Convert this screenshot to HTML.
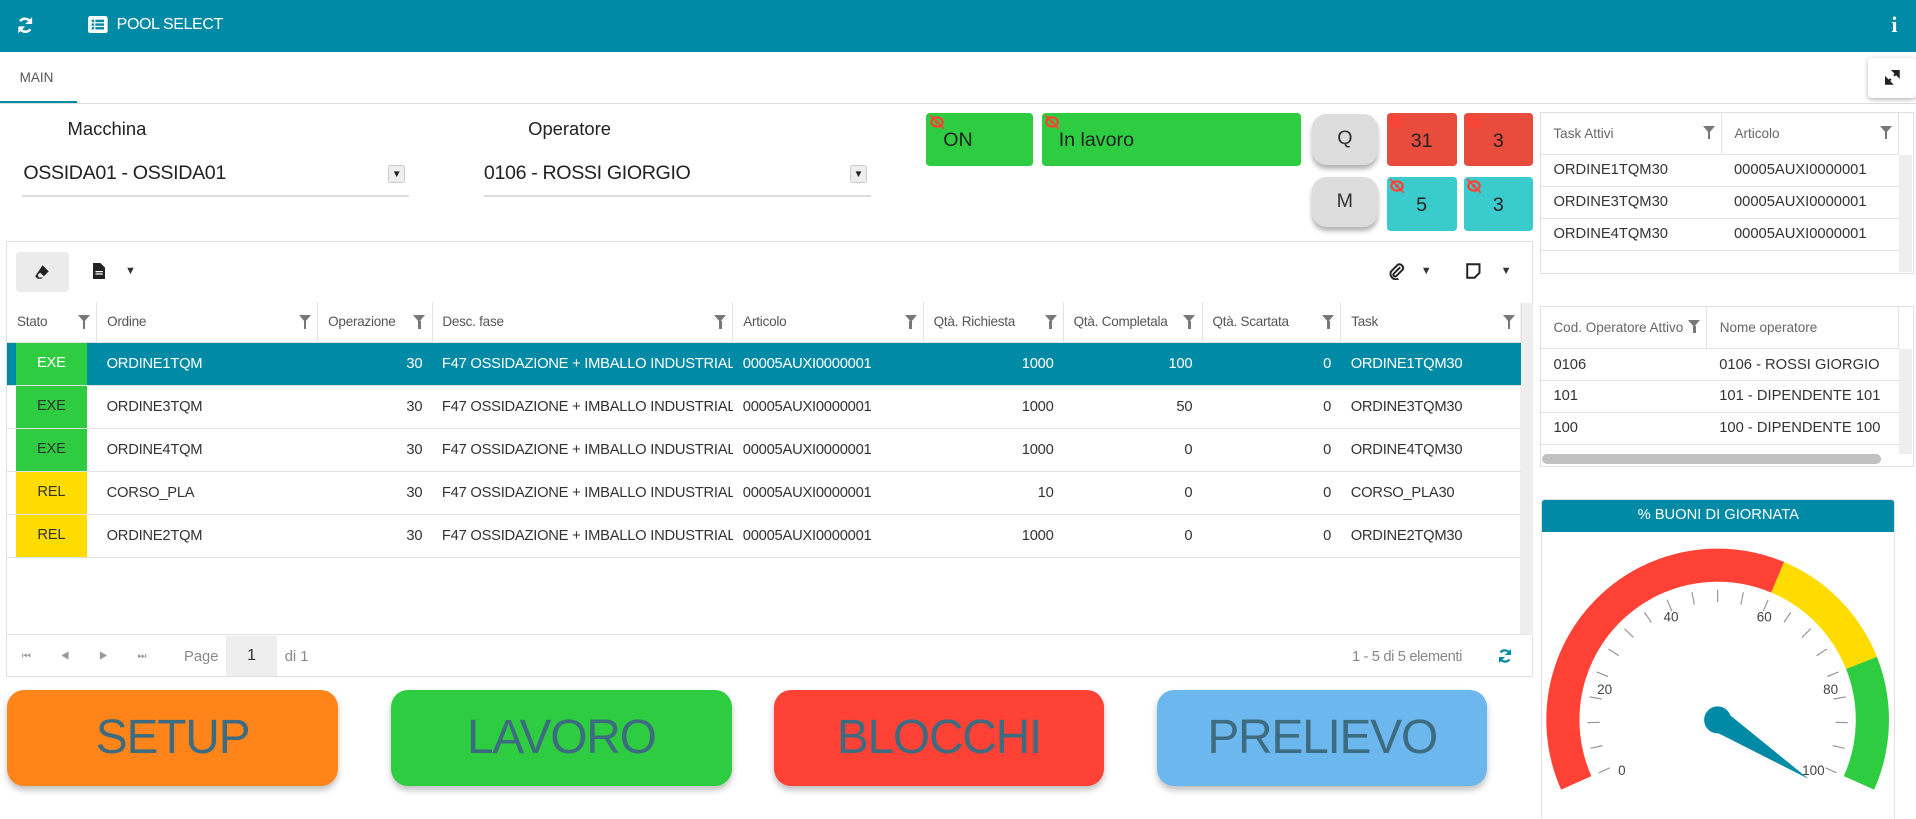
<!DOCTYPE html>
<html><head><meta charset="utf-8"><style>
*{box-sizing:border-box;margin:0;padding:0}
html,body{width:1916px;height:819px;overflow:hidden;background:#fff}
#r{zoom:1.2282;width:1560px;height:666px;position:relative;overflow:hidden;font-family:"Liberation Sans Narrow","Liberation Sans",sans-serif;color:#333}
.a{position:absolute}
.top{left:0;top:0;width:1560px;height:42px;background:#008aa6;color:#fff}
.ttl{left:95px;top:13px;font-size:13px;letter-spacing:-.3px}
.lbl{font-size:15px;color:#222}
.val{font-size:16px;color:#222;letter-spacing:-.3px}
.dd{width:14px;height:15px;background:#eee;border:1px solid #ccc;border-radius:2px;font-size:8px;text-align:center;line-height:14px;color:#222}
.ul{height:1px;background:#ddd}
.st{font-size:16px;color:#222;border-radius:3px;padding:13px 0 0 14px}
.gb{background:#ddd;border-radius:12px;box-shadow:0 3px 4px rgba(0,0,0,.3);font-size:16px;text-align:center;line-height:40px;color:#333}
.ns{font-size:16px;color:#222;border-radius:3px;text-align:center;padding-top:14px}
.eye{position:absolute;left:2px;top:1px;width:13px;height:13px}
.panel{border:1px solid #e0e0e0}
table{border-collapse:collapse;font-size:12px}
.g td,.g th{height:35px;border-bottom:1px solid #e3e3e3;padding:0 8px;white-space:nowrap;overflow:hidden;letter-spacing:-.2px}
.g th{font-weight:normal;font-size:11px;color:#555;text-align:left;border-right:1px solid #e3e3e3;height:33px;position:relative}
.f{position:absolute;right:5px;top:11px;width:0;height:0;border-left:5px solid transparent;border-right:5px solid transparent;border-top:6px solid #777}
.f:after{content:"";position:absolute;left:-1px;top:-1px;width:2px;height:6px;background:#777}
.g td{color:#333}
.rt{text-align:right}
.sel td{background:#008aa6;color:#fff}
.badge{display:block;width:58px;height:34px;line-height:34px;text-align:center;margin-left:-1px}
.big{height:78px;border-radius:14px;box-shadow:0 3px 5px rgba(0,0,0,.25);font-size:39px;color:#3d6c80;text-align:center;line-height:78px;letter-spacing:-1px}
.s td,.s th{height:26px;border-bottom:1px solid #e3e3e3;padding:0 10px;font-size:12px;white-space:nowrap;overflow:hidden}
.s th{height:34px;font-weight:normal;font-size:11px;color:#666;text-align:left;border-right:1px solid #e3e3e3;position:relative}
</style></head><body><div id="r">
<div class="a top">
 <svg class="a" style="left:13px;top:13px" width="15" height="15" viewBox="0 0 16 16"><path d="M13 6A5.5 5.5 0 0 0 3.5 4.5M3 10a5.5 5.5 0 0 0 9.5 1.5" stroke="#fff" stroke-width="2.2" fill="none"/><path d="M14 1v6h-6z M2 15v-6h6z" fill="#fff"/></svg>
 <svg class="a" style="left:72px;top:13px" width="16" height="14" viewBox="0 0 16 14"><rect width="16" height="14" rx="2" fill="#fff"/><g fill="#008aa6"><rect x="3" y="3" width="2" height="2"/><rect x="3" y="6" width="2" height="2"/><rect x="3" y="9" width="2" height="2"/><rect x="6" y="3" width="7" height="2"/><rect x="6" y="6" width="7" height="2"/><rect x="6" y="9" width="7" height="2"/></g></svg>
 <div class="a ttl">POOL SELECT</div>
 <div class="a" style="left:1540px;top:10px;font-size:18px;font-weight:bold;font-family:'Liberation Serif',serif">i</div>
</div>
<div class="a" style="left:16px;top:57px;font-size:11px;color:#555">MAIN</div>
<div class="a" style="left:0;top:82px;width:63px;height:2px;background:#008aa6"></div>
<div class="a" style="left:0;top:84px;width:1560px;height:1px;background:#ddd"></div>
<div class="a" style="left:1521px;top:47px;width:39px;height:33px;background:#fff;box-shadow:0 1px 4px rgba(0,0,0,.3);border-radius:3px"><svg class="a" style="left:14px;top:10px" width="12" height="12" viewBox="0 0 14 14"><path d="M8 1h5v5zM6 13H1V8zM12 2L8.5 5.5M2 12l3.5-3.5" stroke="#222" stroke-width="2" fill="#222"/></svg></div>

<div class="a lbl" style="left:55px;top:96px">Macchina</div>
<div class="a val" style="left:19px;top:132px">OSSIDA01 - OSSIDA01</div>
<div class="a dd" style="left:316px;top:134px">▼</div>
<div class="a ul" style="left:18px;top:159px;width:315px"></div>
<div class="a lbl" style="left:430px;top:96px">Operatore</div>
<div class="a val" style="left:394px;top:132px">0106 - ROSSI GIORGIO</div>
<div class="a dd" style="left:692px;top:134px">▼</div>
<div class="a ul" style="left:394px;top:159px;width:315px"></div>

<svg width="0" height="0" style="position:absolute"><defs><symbol id="eye" viewBox="0 0 14 14"><ellipse cx="7" cy="7" rx="5" ry="4" fill="none" stroke="#ff4136" stroke-width="2"/><circle cx="7" cy="7" r="1.5" fill="#ff4136"/><path d="M1 1l12 12" stroke="#ff4136" stroke-width="1.5"/></symbol></defs></svg>
<div class="a st" style="left:754px;top:92px;width:87px;height:43px;background:#2ecc40"><svg class="eye"><use href="#eye"/></svg>ON</div>
<div class="a st" style="left:848px;top:92px;width:211px;height:43px;background:#2ecc40"><svg class="eye"><use href="#eye"/></svg>In lavoro</div>
<div class="a gb" style="left:1068px;top:93px;width:54px;height:41px">Q</div>
<div class="a gb" style="left:1068px;top:144px;width:54px;height:41px">M</div>
<div class="a ns" style="left:1129px;top:92px;width:57px;height:43px;background:#e74c3c"><svg class="eye"><use href="#eye"/></svg>31</div>
<div class="a ns" style="left:1192px;top:92px;width:56px;height:43px;background:#e74c3c"><svg class="eye"><use href="#eye"/></svg>3</div>
<div class="a ns" style="left:1129px;top:144px;width:57px;height:44px;background:#3acccc"><svg class="eye"><use href="#eye"/></svg>5</div>
<div class="a ns" style="left:1192px;top:144px;width:56px;height:44px;background:#3acccc"><svg class="eye"><use href="#eye"/></svg>3</div>

<div class="a panel" style="left:5px;top:196px;width:1243px;height:355px">
 <div class="a" style="left:7px;top:8px;width:43px;height:33px;background:#ebebeb;border-radius:3px"><svg class="a" style="left:15px;top:10px" width="13" height="13" viewBox="0 0 13 13"><path d="M7 1l5 5-6 6H3L1 10z" fill="#222"/><path d="M3 9l2-2 3 3-1 1H4z" fill="#ebebeb"/></svg></div>
 <svg class="a" style="left:70px;top:17px" width="10" height="13" viewBox="0 0 10 13"><path d="M0 0h6l4 4v9H0z" fill="#222"/><path d="M2 7h6M2 9h6" stroke="#fff"/></svg>
 <div class="a" style="left:96px;top:19px;font-size:9px">▼</div>
 <svg class="a" style="left:1124px;top:16px" width="14" height="15" viewBox="0 0 14 15"><path d="M10 5L4.5 10.5a1.5 1.5 0 0 0 2 2L12 7a3 3 0 0 0-4-4L2.5 8.5a4.5 4.5 0 0 0 6 6" stroke="#222" stroke-width="1.6" fill="none"/></svg>
 <div class="a" style="left:1151px;top:19px;font-size:9px">▼</div>
 <svg class="a" style="left:1188px;top:17px" width="12" height="13" viewBox="0 0 12 13"><path d="M1 1h10v7l-4 4H1z" fill="none" stroke="#222" stroke-width="1.6"/></svg>
 <div class="a" style="left:1216px;top:19px;font-size:9px">▼</div>
 <div class="a" style="left:1232px;top:50px;width:10px;height:270px;background:#eee"></div>
 <table class="g a" style="left:0;top:49px;width:1233px;table-layout:fixed">
  <colgroup><col style="width:73px"><col style="width:180px"><col style="width:93px"><col style="width:245px"><col style="width:155px"><col style="width:114px"><col style="width:113px"><col style="width:113px"><col style="width:147px"></colgroup>
  <tr><th>Stato<i class="f"></i></th><th>Ordine<i class="f"></i></th><th>Operazione<i class="f"></i></th><th>Desc. fase<i class="f"></i></th><th>Articolo<i class="f"></i></th><th>Qtà. Richiesta<i class="f"></i></th><th>Qtà. Completala<i class="f"></i></th><th>Qtà. Scartata<i class="f"></i></th><th>Task<i class="f"></i></th></tr>
  <tr class="sel"><td><span class="badge" style="background:#2ecc40">EXE</span></td><td>ORDINE1TQM</td><td class="rt">30</td><td>F47 OSSIDAZIONE + IMBALLO INDUSTRIALE</td><td>00005AUXI0000001</td><td class="rt">1000</td><td class="rt">100</td><td class="rt">0</td><td>ORDINE1TQM30</td></tr>
  <tr><td><span class="badge" style="background:#2ecc40">EXE</span></td><td>ORDINE3TQM</td><td class="rt">30</td><td>F47 OSSIDAZIONE + IMBALLO INDUSTRIALE</td><td>00005AUXI0000001</td><td class="rt">1000</td><td class="rt">50</td><td class="rt">0</td><td>ORDINE3TQM30</td></tr>
  <tr><td><span class="badge" style="background:#2ecc40">EXE</span></td><td>ORDINE4TQM</td><td class="rt">30</td><td>F47 OSSIDAZIONE + IMBALLO INDUSTRIALE</td><td>00005AUXI0000001</td><td class="rt">1000</td><td class="rt">0</td><td class="rt">0</td><td>ORDINE4TQM30</td></tr>
  <tr><td><span class="badge" style="background:#ffdc00">REL</span></td><td>CORSO_PLA</td><td class="rt">30</td><td>F47 OSSIDAZIONE + IMBALLO INDUSTRIALE</td><td>00005AUXI0000001</td><td class="rt">10</td><td class="rt">0</td><td class="rt">0</td><td>CORSO_PLA30</td></tr>
  <tr><td><span class="badge" style="background:#ffdc00">REL</span></td><td>ORDINE2TQM</td><td class="rt">30</td><td>F47 OSSIDAZIONE + IMBALLO INDUSTRIALE</td><td>00005AUXI0000001</td><td class="rt">1000</td><td class="rt">0</td><td class="rt">0</td><td>ORDINE2TQM30</td></tr>
 </table>
 <div class="a" style="left:0;top:319px;width:1241px;height:1px;background:#e3e3e3"></div>
 <div class="a" style="left:12px;top:333px;font-size:8px;color:#999;word-spacing:22px">⏮ ◀ ▶ ⏭</div>
 <div class="a" style="left:144px;top:332px;font-size:12px;color:#888">Page</div>
 <div class="a" style="left:178px;top:321px;width:42px;height:33px;background:#eee;text-align:center;line-height:33px;font-size:13px">1</div>
 <div class="a" style="left:226px;top:332px;font-size:12px;color:#888">di 1</div>
 <div class="a" style="left:1095px;top:332px;font-size:12px;color:#888;letter-spacing:-.3px">1 - 5 di 5 elementi</div>
 <svg class="a" style="left:1213px;top:331px" width="13" height="13" viewBox="0 0 16 16"><path d="M13 6A5.5 5.5 0 0 0 3.5 4.5M3 10a5.5 5.5 0 0 0 9.5 1.5" stroke="#008aa6" stroke-width="2.2" fill="none"/><path d="M14 1v6h-6z M2 15v-6h6z" fill="#008aa6"/></svg>
</div>

<div class="a big" style="left:6px;top:562px;width:269px;background:#ff851b">SETUP</div>
<div class="a big" style="left:318px;top:562px;width:278px;background:#2ecc40">LAVORO</div>
<div class="a big" style="left:630px;top:562px;width:269px;background:#ff4136">BLOCCHI</div>
<div class="a big" style="left:942px;top:562px;width:269px;background:#6cb8ee">PRELIEVO</div>

<div class="a panel" style="left:1254px;top:91px;width:304px;height:132px">
 <div class="a" style="left:291px;top:34px;width:11px;height:96px;background:#eee"></div>
 <table class="s a" style="left:0;top:0;width:291px;table-layout:fixed"><colgroup><col style="width:147px"><col style="width:144px"></colgroup>
 <tr><th>Task Attivi<i class="f"></i></th><th>Articolo<i class="f"></i></th></tr>
 <tr><td>ORDINE1TQM30</td><td>00005AUXI0000001</td></tr>
 <tr><td>ORDINE3TQM30</td><td>00005AUXI0000001</td></tr>
 <tr><td>ORDINE4TQM30</td><td>00005AUXI0000001</td></tr></table>
</div>
<div class="a panel" style="left:1254px;top:249px;width:304px;height:131px">
 <div class="a" style="left:291px;top:34px;width:11px;height:86px;background:#eee"></div>
 <table class="s a" style="left:0;top:0;width:291px;table-layout:fixed"><colgroup><col style="width:135px"><col style="width:156px"></colgroup>
 <tr><th>Cod. Operatore Attivo<i class="f"></i></th><th>Nome operatore</th></tr>
 <tr><td>0106</td><td>0106 - ROSSI GIORGIO</td></tr>
 <tr><td>101</td><td>101 - DIPENDENTE 101</td></tr>
 <tr><td>100</td><td>100 - DIPENDENTE 100</td></tr></table>
 <div class="a" style="left:1px;top:120px;width:276px;height:8px;background:#c1c1c1;border-radius:4px"></div>
</div>

<div class="a panel" style="left:1255px;top:406px;width:288px;height:260px;border-bottom:0;border-radius:3px 3px 0 0;overflow:hidden">
 <div style="height:26px;background:#008aa6;color:#fff;font-size:12px;text-align:center;line-height:26px">% BUONI DI GIORNATA</div>
 <svg class="a" style="left:0;top:26px" width="288" height="234" viewBox="0 0 288 234">
  <g transform="translate(143,153)" font-family="Liberation Sans,sans-serif" font-size="11" fill="#444">
   <circle r="126" fill="none" stroke="#ff4136" stroke-width="27" stroke-dasharray="300.8 800" transform="rotate(156)"/>
   <circle r="126" fill="none" stroke="#ffdc00" stroke-width="27" stroke-dasharray="100.3 800" transform="rotate(292.8)"/>
   <circle r="126" fill="none" stroke="#2ecc40" stroke-width="27" stroke-dasharray="100.3 800" transform="rotate(338.4)"/>
   <g stroke="#999" stroke-width="1">
    <line y1="-106" y2="-96" transform="rotate(-114)"/><line y1="-106" y2="-96" transform="rotate(-102.6)"/><line y1="-106" y2="-96" transform="rotate(-91.2)"/><line y1="-106" y2="-96" transform="rotate(-79.8)"/><line y1="-106" y2="-96" transform="rotate(-68.4)"/><line y1="-106" y2="-96" transform="rotate(-57)"/><line y1="-106" y2="-96" transform="rotate(-45.6)"/><line y1="-106" y2="-96" transform="rotate(-34.2)"/><line y1="-106" y2="-96" transform="rotate(-22.8)"/><line y1="-106" y2="-96" transform="rotate(-11.4)"/><line y1="-106" y2="-96"/><line y1="-106" y2="-96" transform="rotate(11.4)"/><line y1="-106" y2="-96" transform="rotate(22.8)"/><line y1="-106" y2="-96" transform="rotate(34.2)"/><line y1="-106" y2="-96" transform="rotate(45.6)"/><line y1="-106" y2="-96" transform="rotate(57)"/><line y1="-106" y2="-96" transform="rotate(68.4)"/><line y1="-106" y2="-96" transform="rotate(79.8)"/><line y1="-106" y2="-96" transform="rotate(91.2)"/><line y1="-106" y2="-96" transform="rotate(102.6)"/><line y1="-106" y2="-96" transform="rotate(114)"/>
   </g>
   <g text-anchor="middle">
    <text x="-78" y="45">0</text><text x="-92" y="-21">20</text><text x="-38" y="-80">40</text><text x="38" y="-80">60</text><text x="92" y="-21">80</text><text x="78" y="45">100</text>
   </g>
   <path d="M5 -8L74 48L-5 8Z" fill="#008aa6"/>
   <circle r="11" fill="#008aa6"/>
  </g>
 </svg>
</div>
</div></body></html>
